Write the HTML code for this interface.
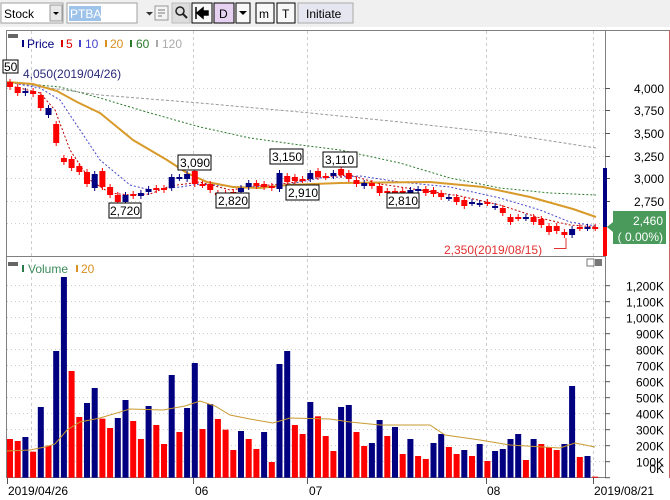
<!DOCTYPE html>
<html><head><meta charset="utf-8">
<style>
body{margin:0;width:670px;height:500px;overflow:hidden;background:#fff;font-family:"Liberation Sans",sans-serif;}
svg{position:absolute;left:0;top:0}
text{font-family:"Liberation Sans",sans-serif;font-size:12px}
</style></head><body>
<svg id="s" width="670" height="500" xmlns="http://www.w3.org/2000/svg">
<rect x="0" y="0" width="670" height="27" fill="#f0f0f0"/>
<rect x="1" y="3" width="62" height="20" fill="#fff" stroke="#a0a0a0"/>
<text x="4" y="18" font-size="13" fill="#000">Stock</text>
<rect x="50" y="5" width="12" height="16" fill="#e8e8e8" stroke="#999"/>
<path d="M53 12h6l-3 3z" fill="#000"/>
<rect x="67" y="3" width="70" height="20" fill="#fff" stroke="#a0a0a0"/>
<rect x="69" y="6" width="32" height="15" fill="#9ec3ea"/>
<text x="70" y="18" font-size="13" fill="#fff">PTBA</text>
<path d="M146 12h7l-3.5 3.5z" fill="#333"/>
<rect x="155" y="6" width="13" height="14" fill="#f4f4f4" stroke="#999"/>
<path d="M158 10h7M158 13h7M158 16h4" stroke="#777"/>
<rect x="172" y="3" width="18" height="20" fill="#ddd" stroke="#bbb"/>
<circle cx="180" cy="11" r="4" fill="none" stroke="#222" stroke-width="1.5"/><path d="M183 14l4 4" stroke="#222" stroke-width="2"/>
<rect x="192" y="3" width="20" height="20" fill="#f8f8f8" stroke="#000"/>
<path d="M196 7v12M197 13l6-5v10zM202 11h6v4h-6" fill="#000" stroke="#000" stroke-width="1.5"/>
<rect x="214" y="3" width="20" height="20" fill="#e6d2f0" stroke="#000"/>
<text x="219" y="18" font-size="13" fill="#000">D</text>
<rect x="236" y="3" width="14" height="20" fill="#f8f8f8" stroke="#000"/>
<path d="M239 11h8l-4 4z" fill="#000"/>
<rect x="256" y="3" width="18" height="20" fill="#f8f8f8" stroke="#000"/>
<text x="259" y="18" font-size="13">m</text>
<rect x="277" y="3" width="18" height="20" fill="#f8f8f8" stroke="#000"/>
<text x="282" y="18" font-size="13">T</text>
<rect x="298" y="3" width="55" height="20" fill="#e6e6f0" stroke="#aaa"/>
<text x="306" y="18" font-size="12">Initiate</text>
<path d="M6 30.5H670M6.5 30V478M6 256.5H606M605.5 30V478M6 477.5H606" stroke="#808080" fill="none"/>
<path d="M669.5 30V478" stroke="#c66"/>
<g stroke="#ccc" stroke-dasharray="3,3">
<path d="M31.5 31V477M193.5 31V477M307.5 31V477M486.5 31V477M593.5 31V477"/>
</g>
<g stroke="#ccc" stroke-dasharray="1,3">
<path d="M7 88.5H605M7 110.5H605M7 133.5H605M7 156.5H605M7 178.5H605M7 201.5H605M7 223.5H605"/>
<path id="vg" d=""/>
</g>
<g font-size="12" fill="#000" text-anchor="end">
<text x="664" y="93">4,000</text><text x="664" y="115">3,750</text><text x="664" y="138">3,500</text>
<text x="664" y="161">3,250</text><text x="664" y="183">3,000</text><text x="664" y="206">2,750</text>
</g>
<path d="M605 88.5h5M605 110.5h5M605 133.5h5M605 156.5h5M605 178.5h5M605 201.5h5" stroke="#555"/>
<rect x="603" y="168" width="4" height="59" fill="#000080"/>
<rect x="603" y="227" width="4" height="29" fill="#f00"/>
<rect x="613" y="211" width="53" height="33" fill="#4a9a5c"/>
<path d="M607 227l6-5v10z" fill="#4a9a5c"/>
<text x="663" y="225" fill="#fff" text-anchor="end">2,460</text>
<text x="663" y="241" fill="#fff" text-anchor="end">( 0.00%)</text>
<rect x="8" y="34" width="10" height="4" fill="#666"/>
<rect x="22" y="40" width="2" height="7" fill="#000080"/><text x="27" y="48" fill="#000080">Price</text>
<rect x="61" y="40" width="2" height="7" fill="#d00"/><text x="66" y="48" fill="#d00">5</text>
<rect x="79" y="40" width="2" height="7" fill="#44c"/><text x="85" y="48" fill="#44c">10</text>
<rect x="105" y="40" width="2" height="7" fill="#d89020"/><text x="110" y="48" fill="#d89020">20</text>
<rect x="130" y="40" width="2" height="7" fill="#2a7a2a"/><text x="136" y="48" fill="#2a7a2a">60</text>
<rect x="156" y="40" width="2" height="7" fill="#aaa"/><text x="162" y="48" fill="#aaa">120</text>
<rect x="8" y="262" width="10" height="4" fill="#666"/>
<rect x="22" y="265" width="2" height="7" fill="#2a7a4a"/><text x="28" y="273" fill="#3a8a5a">Volume</text>
<rect x="76" y="265" width="2" height="7" fill="#d89020"/><text x="81" y="273" fill="#d89020">20</text>
<rect x="587" y="259" width="7" height="7" fill="#fff" stroke="#777"/><rect x="595" y="259" width="7" height="7" fill="#777"/>
<path d="M7 82L60 87L100 98L150 113L200 127L250 138L300 145L340 150L400 163L450 178L500 188L550 193L596 195" fill="none" stroke="#2a7a2a" stroke-dasharray="2,2"/>
<path d="M7 82L100 95L200 103L300 112L400 122L500 133L596 148" fill="none" stroke="#999" stroke-dasharray="3,2"/>
<path d="M7 82L40 88L60 100L80 130L100 160L130 185L150 190L180 187L200 184L240 187L280 186L320 178L360 176L400 182L450 187L500 198L540 210L570 222L596 226" fill="none" stroke="#44c" stroke-dasharray="2,2"/>
<path d="M7 85L40 93L55 110L70 150L90 180L110 193L130 195L150 194L170 186L200 182L230 190L260 186L290 183L320 177L350 175L380 184L420 190L460 196L500 205L540 218L570 225L596 227" fill="none" stroke="#b00" stroke-dasharray="2,2"/>
<path d="M7 82L33 84L57 91L77 102L100 113L133 140L167 160L187 173L207 182L233 187L260 188L287 185L340 183L430 182L483 187L530 197L573 209L596 217" fill="none" stroke="#d89a2a" stroke-width="2"/>
<g id="c"></g>
<g font-size="12">
<rect x="3" y="60" width="15" height="13" fill="#fff" stroke="#000"/><text x="4" y="71">50</text>
<text x="23" y="78" fill="#2a2a7a">4,050(2019/04/26)</text>
<rect x="178" y="155" width="33" height="15" fill="#fff" stroke="#000"/><text x="180" y="167">3,090</text>
<rect x="109" y="203" width="32" height="15" fill="#fff" stroke="#000"/><text x="110" y="215">2,720</text>
<rect x="216" y="193" width="33" height="15" fill="#fff" stroke="#000"/><text x="218" y="205">2,820</text>
<rect x="270" y="149" width="33" height="15" fill="#fff" stroke="#000"/><text x="272" y="161">3,150</text>
<rect x="286" y="185" width="33" height="15" fill="#fff" stroke="#000"/><text x="288" y="197">2,910</text>
<rect x="323" y="152" width="34" height="15" fill="#fff" stroke="#000"/><text x="325" y="164">3,110</text>
<rect x="387" y="193" width="32" height="15" fill="#fff" stroke="#000"/><text x="388" y="205">2,810</text>
<text x="444" y="254" fill="#e03030">2,350(2019/08/15)</text>
<path d="M554 248.5H566V238" stroke="#e03030" fill="none"/>
</g>
<g id="v"></g>
<g id="vl" font-size="12" text-anchor="end"></g>
<g font-size="12">
<text x="8" y="495">2019/04/26</text><text x="195" y="495">06</text><text x="309" y="495">07</text>
<text x="487" y="495">08</text><text x="594" y="495">2019/08/21</text>
</g>
<path d="M7.5 478v6M193.5 478v6M307.5 478v6M486.5 478v6M593.5 478v6" stroke="#555"/>
</svg>
<script>
var ns="http://www.w3.org/2000/svg";
function el(p,t,a){var e=document.createElementNS(ns,t);for(var k in a)e.setAttribute(k,a[k]);p.appendChild(e);return e;}
var C=[[82,87,0],[87,93,0],[91,93,1],[91,94,0],[95,108,0],[108,115,1],[124,143,0],[158,162,0],[159,168,0],[166,172,0],[172,184,0],[174,188,1],[171,187,0],[187,195,0],[195,202,0],[195,202,1],[194,196,0],[193,196,1],[189,192,1],[188,190,0],[188,190,0],[177,188,1],[177,178,1],[174,179,1],[171,184,0],[184,185,0],[184,190,0],[193,194,0],[193,194,0],[192,193,0],[188,192,1],[183,187,1],[183,186,0],[184,187,0],[186,188,0],[173,189,1],[176,182,0],[177,181,0],[179,180,0],[173,179,1],[171,177,0],[176,177,0],[173,176,1],[169,175,0],[173,179,0],[180,184,0],[183,186,1],[183,186,0],[186,193,0],[191,192,0],[191,192,0],[191,192,0],[190,195,1],[189,190,1],[189,193,0],[190,194,0],[193,197,0],[197,198,1],[197,202,0],[200,206,0],[202,203,1],[203,204,1],[202,203,0],[206,207,1],[208,213,0],[217,222,0],[217,218,0],[217,218,1],[217,222,0],[219,225,0],[226,232,0],[226,231,0],[232,235,0],[229,235,1],[227,228,0],[227,228,1],[227,228,0]];
var g=document.getElementById("c");
C.forEach(function(d,i){var x=10+i*7.7;var col=d[2]?"#000080":"#f00";
el(g,"line",{x1:x,x2:x,y1:d[0]-3,y2:d[1]+3,stroke:col});
el(g,"rect",{x:x-3,y:d[0],width:6,height:Math.max(2,d[1]-d[0]),fill:col});});
var V=[[552,0],[558,0],[546,1],[590,0],[456,1],[572,0],[288,1],[66,1],[348,0],[486,0],[444,1],[399,1],[491,0],[519,0],[489,1],[435,1],[498,0],[552,0],[453,1],[510,0],[567,0],[360,1],[531,0],[459,1],[324,1],[522,0],[447,1],[492,0],[524,0],[585,0],[528,1],[552,0],[582,0],[531,1],[621,0],[327,1],[288,1],[510,0],[537,0],[441,1],[484,0],[543,0],[588,0],[456,1],[450,1],[531,0],[573,0],[564,1],[495,1],[543,0],[516,1],[597,0],[552,1],[603,0],[612,0],[564,1],[537,1],[576,0],[597,0],[585,1],[603,0],[567,1],[618,0],[588,1],[582,1],[552,1],[537,1],[615,0],[552,1],[567,0],[576,0],[585,0],[567,1],[393,1],[606,0],[603,1],[665,0]];
var v=document.getElementById("v");
V.forEach(function(d,i){var x=7+i*7.7;var t=255+d[0]/3;el(v,"rect",{x:x,y:t,width:6,height:477.7-t,fill:d[1]?"#000080":"#f00"});});
el(v,"path",{d:"M7 451L30 450L45 447L55 444L67 430L80 422L100 418L130 409L163 410L185 406L200 401L215 406L230 415L250 419L273 423L290 418L330 419L350 422L380 425L430 425L445 435L480 440L510 445L560 448L575 443L595 447",fill:"none",stroke:"#c89a30"});
var vg="",vl=document.getElementById("vl");
var lab=["0K","100K","200K","300K","400K","500K","600K","700K","800K","900K","1,000K","1,100K","1,200K"];
for(var k=0;k<=12;k++){var y=477.7-16*k;if(k>0)vg+="M7 "+(y|0)+".5H605";
var t=el(vl,"text",{x:664,y:(k==0?473:y+5)});t.textContent=lab[k];
el(vl,"line",{x1:605,x2:610,y1:y,y2:y,stroke:"#555"});}
document.getElementById("vg").setAttribute("d",vg);
</script>
</body></html>
